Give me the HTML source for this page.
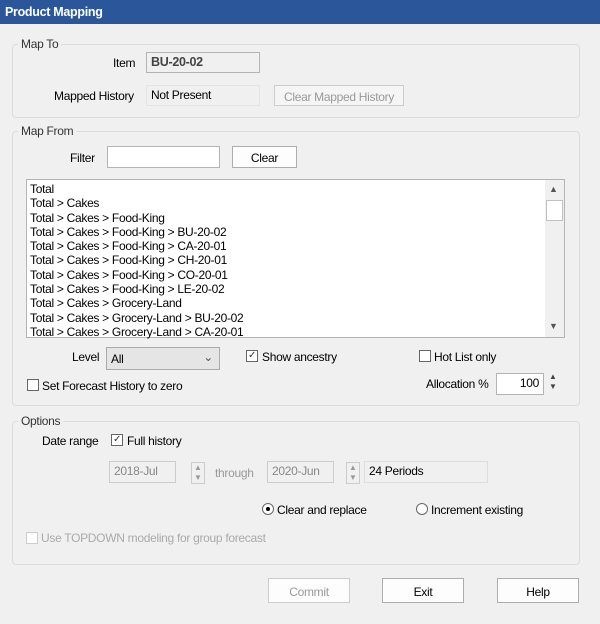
<!DOCTYPE html>
<html><head><style>
*{box-sizing:border-box;margin:0;padding:0}
body{width:600px;height:624px;background:#f0f0f0;font-family:"Liberation Sans",Arial,sans-serif;font-size:12px;color:#000;position:relative;overflow:hidden;letter-spacing:-0.3px}
.a{position:absolute;white-space:nowrap}
.title{left:0;top:0;width:600px;height:24px;background:#2b579a;color:#fff;font-weight:bold;font-size:12.5px;padding:5px 0 0 5px}
.grp{position:absolute;border:1px solid #dcdcdc;border-radius:4px}
.lg{position:absolute;background:#f0f0f0;padding:0 3px;color:#333}
.box{position:absolute;border:1px solid #b4b4b4;background:#fff;padding:2px 4px}
.dis{background:#f0f0f0;border-color:#ccc;color:#888}
.btn{position:absolute;border:1px solid #adadad;background:#fdfdfd;text-align:center;padding-top:4px}
.cb{position:absolute;width:12px;height:12px;border:1px solid #666;background:#fff;font-size:10px;line-height:10px;text-align:center;color:#333}
.rb{position:absolute;width:12px;height:12px;border:1px solid #666;border-radius:50%;background:#fff}
.gray{color:#999}
</style></head><body>
<div class="a title">Product Mapping</div>

<div class="grp" style="left:12px;top:44px;width:568px;height:74px"></div>
<div class="lg" style="left:18px;top:37px">Map To</div>
<div class="a" style="left:113px;top:56px">Item</div>
<div class="box" style="left:146px;top:52px;width:114px;height:21px;background:#f0f0f0;font-weight:bold;color:#444;font-size:12.5px">BU-20-02</div>
<div class="a" style="left:54px;top:89px">Mapped History</div>
<div class="box" style="left:146px;top:85px;width:114px;height:21px;background:#f0f0f0;border-color:#e3e3e3">Not Present</div>
<div class="btn gray" style="left:274px;top:85px;width:130px;height:21px;border-color:#ccc;background:#f5f5f5">Clear Mapped History</div>

<div class="grp" style="left:12px;top:131px;width:568px;height:275px"></div>
<div class="lg" style="left:18px;top:124px">Map From</div>
<div class="a" style="left:70px;top:151px">Filter</div>
<div class="box" style="left:107px;top:146px;width:113px;height:22px"></div>
<div class="btn" style="left:232px;top:146px;width:65px;height:22px">Clear</div>

<div class="box" style="left:26px;top:179px;width:539px;height:159px;padding:2px 3px;line-height:14.3px">
Total<br>Total &gt; Cakes<br>Total &gt; Cakes &gt; Food-King<br>Total &gt; Cakes &gt; Food-King &gt; BU-20-02<br>Total &gt; Cakes &gt; Food-King &gt; CA-20-01<br>Total &gt; Cakes &gt; Food-King &gt; CH-20-01<br>Total &gt; Cakes &gt; Food-King &gt; CO-20-01<br>Total &gt; Cakes &gt; Food-King &gt; LE-20-02<br>Total &gt; Cakes &gt; Grocery-Land<br>Total &gt; Cakes &gt; Grocery-Land &gt; BU-20-02<br>Total &gt; Cakes &gt; Grocery-Land &gt; CA-20-01
</div>
<div class="a" style="left:545px;top:180px;width:19px;height:157px;background:#f0f0f0"></div>
<div class="a" style="left:549px;top:184px;font-size:9px;color:#555">▲</div>
<div class="a" style="left:546px;top:200px;width:17px;height:21px;background:#fff;border:1px solid #c0c0c0"></div>
<div class="a" style="left:549px;top:321px;font-size:9px;color:#555">▼</div>

<div class="a" style="left:72px;top:350px">Level</div>
<div class="box" style="left:106px;top:347px;width:114px;height:23px;background:#e5e5e5;border-color:#aaa;padding-top:4px">All<span style="position:absolute;right:6px;top:2px;color:#555">⌄</span></div>
<div class="cb" style="left:246px;top:350px">✓</div>
<div class="a" style="left:262px;top:350px">Show ancestry</div>
<div class="cb" style="left:419px;top:350px"></div>
<div class="a" style="left:434px;top:350px">Hot List only</div>
<div class="cb" style="left:27px;top:379px"></div>
<div class="a" style="left:42px;top:379px">Set Forecast History to zero</div>
<div class="a" style="left:426px;top:377px">Allocation %</div>
<div class="box" style="left:496px;top:373px;width:48px;height:22px;text-align:right">100</div>
<div class="a" style="left:549px;top:372px;font-size:8px;line-height:10px;color:#444">▲<br>▼</div>

<div class="grp" style="left:12px;top:421px;width:568px;height:144px"></div>
<div class="lg" style="left:18px;top:414px">Options</div>
<div class="a" style="left:42px;top:434px">Date range</div>
<div class="cb" style="left:111px;top:434px">✓</div>
<div class="a" style="left:127px;top:434px">Full history</div>
<div class="box dis" style="left:109px;top:461px;width:67px;height:22px">2018-Jul</div>
<div class="a gray" style="left:191px;top:462px;font-size:8px;line-height:10px;border:1px solid #ccc;padding:0 2px">▲<br>▼</div>
<div class="a gray" style="left:215px;top:466px">through</div>
<div class="box dis" style="left:267px;top:461px;width:67px;height:22px">2020-Jun</div>
<div class="a gray" style="left:346px;top:462px;font-size:8px;line-height:10px;border:1px solid #ccc;padding:0 2px">▲<br>▼</div>
<div class="box" style="left:364px;top:461px;width:124px;height:22px;background:#f0f0f0;border-color:#ddd">24 Periods</div>
<div class="rb" style="left:262px;top:503px"><div style="width:4px;height:4px;background:#000;border-radius:50%;margin:3px"></div></div>
<div class="a" style="left:277px;top:503px">Clear and replace</div>
<div class="rb" style="left:416px;top:503px"></div>
<div class="a" style="left:431px;top:503px">Increment existing</div>
<div class="cb" style="left:26px;top:532px;border-color:#ccc"></div>
<div class="a gray" style="left:41px;top:531px;color:#aaa">Use TOPDOWN modeling for group forecast</div>

<div class="btn gray" style="left:268px;top:578px;width:82px;height:25px;padding-top:6px;border-color:#ccc">Commit</div>
<div class="btn" style="left:382px;top:578px;width:82px;height:25px;padding-top:6px">Exit</div>
<div class="btn" style="left:497px;top:578px;width:82px;height:25px;padding-top:6px">Help</div>
</body></html>
